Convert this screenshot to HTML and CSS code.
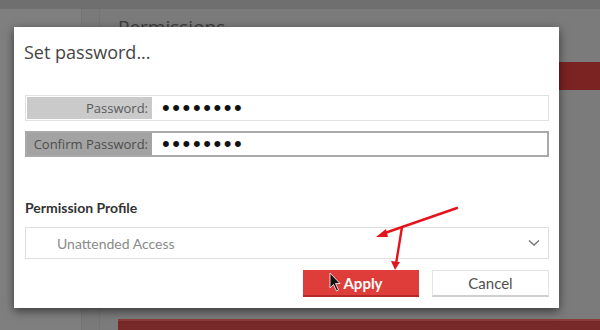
FILE: index.html
```html
<!DOCTYPE html>
<html>
<head>
<meta charset="utf-8">
<link rel="stylesheet" href="styles.css">
</head>
<body>
<div class="app">
  <div class="topband"></div>
  <div class="cols">
    <div class="sidebar"></div>
    <div class="rail"></div>
    <div class="main">
      <div class="heading">Permissions</div>
      <div class="redbar"></div>
      <div class="spacer"></div>
      <div class="redbar-bottom"></div>
    </div>
  </div>
</div>

<div class="dialog">
  <div class="title">Set password...</div>
  <div class="field">
    <div class="label">Password:</div>
    <div class="dots">••••••••</div>
  </div>
  <div class="field field-active">
    <div class="label">Confirm Password:</div>
    <div class="dots">••••••••</div>
  </div>
  <div class="section">Permission Profile</div>
  <div class="select">
    <span>Unattended Access</span>
    <svg class="chev" width="12" height="8" viewBox="0 0 12 8"><path d="M1 1.5 L6 6 L11 1.5" fill="none" stroke="#777" stroke-width="1.5"/></svg>
  </div>
  <div class="buttons">
    <div class="btn btn-apply">Apply</div>
    <div class="btn btn-cancel">Cancel</div>
  </div>
</div>

<svg class="arrows" width="600" height="330" viewBox="0 0 600 330">
  <g stroke="#e3141c" stroke-width="2.4" fill="none" stroke-linecap="round">
    <path d="M457 208 L382 234"/>
    <path d="M402 227 L396 264"/>
  </g>
  <g fill="#e3141c">
    <path d="M376 237 L386 229 L388 237 Z"/>
    <path d="M395 270 L391 261 L400 262 Z"/>
  </g>
  <path d="M330 273 L330 288 L333.5 284.5 L336.5 291 L338.5 290 L335.5 283.5 L340 283.5 Z" fill="#111" stroke="#fff" stroke-width="0.8"/>
</svg>
</body>
</html>
```

FILE: styles.css
```css
html, body {
  margin: 0;
  padding: 0;
}
body {
  width: 600px;
  height: 330px;
  overflow: hidden;
  position: relative;
  background: #7b7b7b;
  font-family: "Open Sans", "Noto Sans", sans-serif;
}
.app {
  display: flex;
  flex-direction: column;
  height: 330px;
}
.topband {
  height: 9px;
  background: #6f6f6f;
}
.cols {
  flex: 1;
  display: flex;
}
.sidebar {
  width: 81px;
  background: #7f7f7f;
  border-right: 1px solid #737373;
}
.rail {
  width: 17px;
  background: #7a7a7a;
  border-right: 1px solid #747474;
}
.main {
  flex: 1;
  display: flex;
  flex-direction: column;
  padding-left: 18px;
}
.heading {
  font-size: 19px;
  color: #3e3e3e;
  line-height: 24px;
  margin-top: 6px;
}
.redbar {
  margin-top: 23px;
  height: 28px;
  background: #7b2222;
}
.spacer {
  flex: 1;
}
.redbar-bottom {
  height: 9px;
  background: #772828;
  border-top: 2px solid #8a3a3a;
}
.dialog {
  position: absolute;
  left: 14px;
  top: 27px;
  width: 545px;
  height: 281px;
  box-sizing: border-box;
  background: #fff;
  box-shadow: 0 3px 9px rgba(0,0,0,0.55);
  padding: 13px 10px 0 11px;
  display: flex;
  flex-direction: column;
}
.title {
  font-family: "Open Sans", sans-serif;
  font-size: 18px;
  line-height: 24px;
  color: #454545;
  margin-left: -1px;
}
.field {
  margin-top: 31px;
  height: 26px;
  box-sizing: border-box;
  border: 1px solid #e2e2e2;
  padding: 1px;
  display: flex;
  align-items: stretch;
}
.field + .field {
  margin-top: 10px;
}
.field-active {
  border: 2px solid #a9a9a9;
  padding: 0;
}
.label {
  width: 125px;
  box-sizing: border-box;
  background: #cacaca;
  color: #5a5a5a;
  font-size: 13px;
  text-align: right;
  padding-right: 4px;
  line-height: 22px;
}
.field-active .label {
  background: #a3a3a3;
  color: #4e4e4e;
  width: 125px;
}
.dots {
  padding-left: 10px;
  font-family: "Liberation Sans", sans-serif;
  font-size: 22px;
  line-height: 22px;
  letter-spacing: 2.6px;
  color: #111;
}
.section {
  margin-top: 42px;
  font-family: Lato, sans-serif;
  font-weight: bold;
  font-size: 14px;
  line-height: 18px;
  color: #333;
}
.select {
  margin-top: 10px;
  height: 32px;
  box-sizing: border-box;
  border: 1px solid #dedede;
  display: flex;
  align-items: center;
  justify-content: space-between;
  padding: 0 8px 0 31px;
  font-family: Lato, sans-serif;
  font-size: 14px;
  color: #8a8a8a;
}
.buttons {
  margin-top: 11px;
  display: flex;
  justify-content: flex-end;
  gap: 13px;
}
.btn {
  height: 27px;
  box-sizing: border-box;
  display: flex;
  align-items: center;
  justify-content: center;
  font-family: Lato, sans-serif;
  font-size: 15px;
}
.btn-apply {
  width: 116px;
  background: #de3d3a;
  border-bottom: 2px solid #b52a28;
  color: #fff;
  font-weight: bold;
  padding-left: 4px;
}
.btn-cancel {
  width: 117px;
  background: #fff;
  border: 1px solid #e4e4e4;
  border-bottom: 2px solid #cfcfcf;
  color: #505050;
}
.arrows {
  position: absolute;
  left: 0;
  top: 0;
}
```
